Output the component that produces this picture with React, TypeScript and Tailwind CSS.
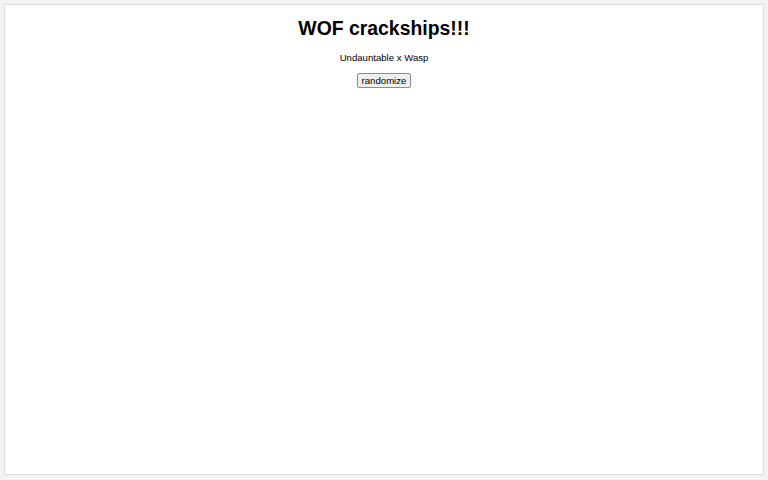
export default function App() {
  return (
    <div className="h-[480px] w-[768px] bg-[#f3f3f3] p-1" style={{ fontFamily: '"Liberation Sans", Arial, sans-serif' }}>
      <div className="flex h-[471px] flex-col items-center border border-[#dcdcdc] bg-white text-black">
        <h1 className="mt-[11px] text-[19.4px] font-bold leading-[24px]">WOF crackships!!!</h1>
        <p className="mt-[12px] text-[9.6px] leading-[12px]">Undauntable x Wasp</p>
        <button className="mt-[9px] h-[15px] rounded-[2px] border border-[#8d8d8d] bg-[#efefef] px-[4px] text-[9.6px] leading-[12px]">
          randomize
        </button>
      </div>
    </div>
  )
}
